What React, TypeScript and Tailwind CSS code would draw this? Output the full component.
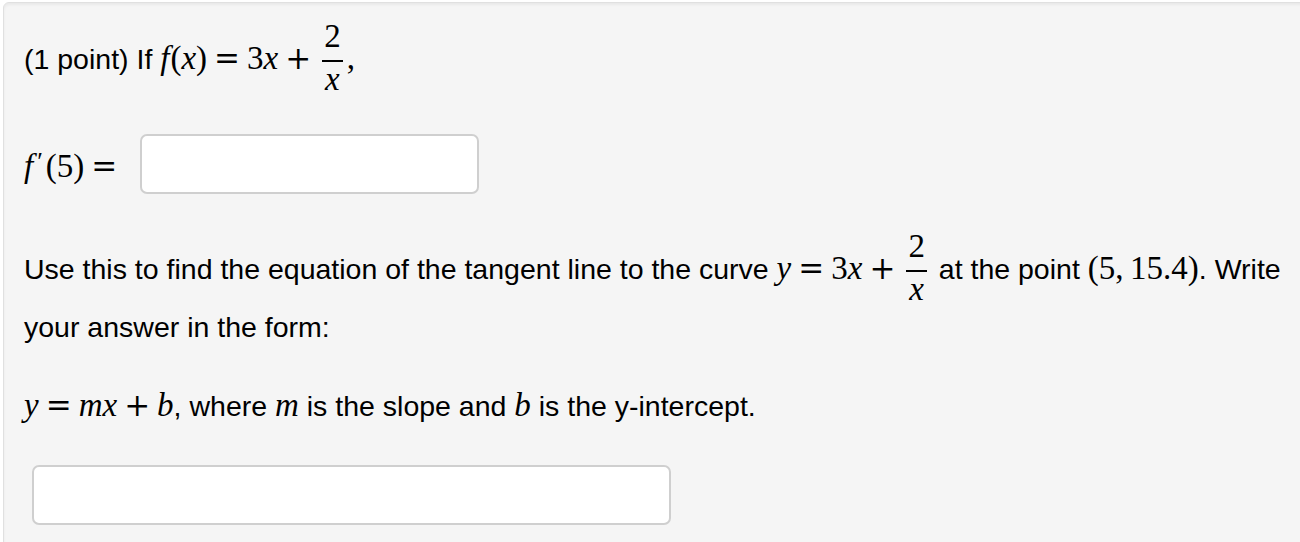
import React from 'react';

const sans = "font-['Liberation_Sans',Arial,sans-serif]";
const serif = "font-['Liberation_Serif','Times_New_Roman',serif]";
const opFont = "font-['DejaVu_Serif','Liberation_Serif',serif]";

// a small MathJax-ish fraction: numerator over a bar over denominator
const Frac: React.FC<{ num: string; den: string }> = ({ num, den }) => (
  <span className="inline-flex flex-col items-center align-[22px] mx-[4px] leading-none">
    <span className="px-[2px] pb-[7px]">{num}</span>
    <span className="block h-[2px] w-full bg-black" />
    <span className="px-[2px] pt-[1px] italic">{den}</span>
  </span>
);

const Op: React.FC<{ children: React.ReactNode }> = ({ children }) => (
  <span className={`${opFont} text-[31px] mx-[7px]`}>{children}</span>
);

const M: React.FC<{ children: React.ReactNode }> = ({ children }) => (
  <span className={`${serif} text-[33px]`}>{children}</span>
);

const AnswerBox: React.FC<{ className: string }> = ({ className }) => (
  <input
    type="text"
    className={`h-[60px] bg-white border-2 border-[#cfcfcf] rounded-[7px] outline-none ${className}`}
  />
);

export default function App() {
  return (
    <div className="w-[1300px] h-[542px] overflow-hidden bg-white">
      <div className="mt-[2px] ml-[3px] w-[1340px] h-[600px] bg-[#f5f5f5] border border-[#e0e0e0] rounded-tl-[6px] shadow-[inset_0_2px_3px_rgba(0,0,0,0.05)] pl-[20px] pt-[17px] text-black">
        {/* question header */}
        <div className={`${sans} text-[28.5px] leading-[32px]`}>
          (1 point) If{' '}
          <M>
            <i className="mr-[1px]">f</i>(<i>x</i>)<Op>=</Op>3<i>x</i>
            <Op>+</Op>
            <Frac num="2" den="x" />,
          </M>
        </div>

        {/* f'(5) */}
        <div className="flex items-center mt-[38px] h-[60px]">
          <span className={`${serif} text-[33px] w-[116px] leading-[32px]`}>
            <i>f</i>
            <span className="text-[26px] align-[7px] ml-[4px] mr-[3px]">&prime;</span>(5)<Op>=</Op>
          </span>
          <AnswerBox className="w-[339px]" />
        </div>

        {/* tangent line */}
        <div className={`${sans} text-[28.5px] leading-[32px] mt-[36px]`}>
          Use this to find the equation of the tangent line to the curve{' '}
          <M>
            <i>y</i>
            <Op>=</Op>3<i>x</i>
            <Op>+</Op>
            <Frac num="2" den="x" />
          </M>{' '}
          at the point <M>(5,&thinsp;15.4)</M>. Write
        </div>
        <div className={`${sans} text-[28.5px] leading-[32px] mt-[5px]`}>your answer in the form:</div>

        <div className={`${sans} text-[28.5px] leading-[32px] mt-[46px]`}>
          <M>
            <i>y</i>
            <Op>=</Op>
            <i>mx</i>
            <Op>+</Op>
            <i>b</i>
          </M>
          , where <M><i>m</i></M> is the slope and <M><i>b</i></M> is the y-intercept.
        </div>

        <AnswerBox className="mt-[43px] ml-[8px] w-[639px] block" />
      </div>
    </div>
  );
}
